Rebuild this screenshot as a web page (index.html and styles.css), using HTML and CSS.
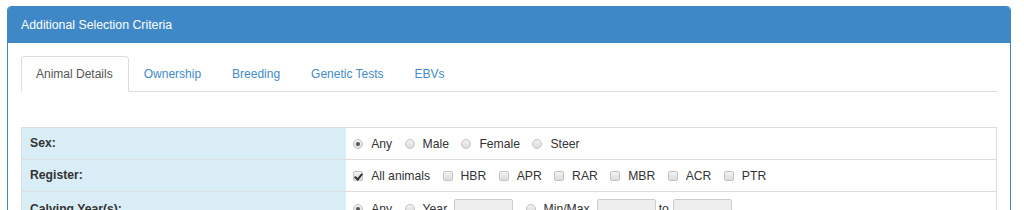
FILE: index.html
```html
<!DOCTYPE html>
<html>
<head>
<meta charset="utf-8">
<link rel="stylesheet" href="styles.css">
</head>
<body>
<div class="panel">
  <div class="panel-heading">Additional Selection Criteria</div>
  <div class="panel-body">
    <ul class="tabs">
      <li class="tab active">Animal Details</li>
      <li class="tab">Ownership</li>
      <li class="tab">Breeding</li>
      <li class="tab">Genetic Tests</li>
      <li class="tab">EBVs</li>
    </ul>
    <table class="criteria">
      <tr>
        <th>Sex:</th>
        <td>
          <span class="opt"><span class="radio on"></span>Any</span>
          <span class="opt"><span class="radio"></span>Male</span>
          <span class="opt"><span class="radio"></span>Female</span>
          <span class="opt"><span class="radio"></span>Steer</span>
        </td>
      </tr>
      <tr>
        <th>Register:</th>
        <td>
          <span class="opt"><span class="check on"></span>All animals</span>
          <span class="opt"><span class="check"></span>HBR</span>
          <span class="opt"><span class="check"></span>APR</span>
          <span class="opt"><span class="check"></span>RAR</span>
          <span class="opt"><span class="check"></span>MBR</span>
          <span class="opt"><span class="check"></span>ACR</span>
          <span class="opt"><span class="check"></span>PTR</span>
        </td>
      </tr>
      <tr class="tall">
        <th>Calving Year(s):</th>
        <td>
          <span class="opt"><span class="radio on"></span>Any</span>
          <span class="opt"><span class="radio"></span>Year<span class="box"></span></span>
          <span class="opt"><span class="radio"></span>Min/Max<span class="box"></span><span class="to">to</span><span class="box"></span></span>
        </td>
      </tr>
    </table>
  </div>
</div>
</body>
</html>
```
FILE: styles.css
```css
* { box-sizing: border-box; }
html, body { margin: 0; padding: 0; background: #fff; }
body {
  font-family: "Liberation Sans", Arial, sans-serif;
  font-size: 12.2px;
  color: #333;
  padding: 6px 13px 0 7px;
}
.panel {
  border: 1px solid #3e88c8;
  border-radius: 4px;
  height: 220px;
  overflow: hidden;
}
.panel-heading {
  background: #3e88c8;
  color: #fff;
  font-size: 12.3px;
  height: 36px;
  line-height: 16px;
  padding: 10px 13px;
}
.panel-body {
  padding: 13px 13px 0 13px;
}
.tabs {
  list-style: none;
  margin: 0;
  padding: 0;
  display: flex;
  border-bottom: 1px solid #ddd;
  font-size: 12px;
}
.tab {
  padding: 10px 15px 10px 14px;
  line-height: 14px;
  color: #428bca;
  border: 1px solid transparent;
  border-radius: 4px 4px 0 0;
  margin-bottom: -1px;
}
.tab.active {
  color: #555;
  border-color: #ddd #ddd transparent #ddd;
  background: #fff;
}
.criteria {
  margin-top: 35px;
  width: 100%;
  border-collapse: collapse;
  border: 1px solid #ddd;
}
.criteria th, .criteria td {
  border-top: 1px solid #ddd;
  padding: 6px 6px;
  line-height: 18px;
  height: 31px;
  text-align: left;
  vertical-align: middle;
  white-space: nowrap;
}
.criteria tr.tall th, .criteria tr.tall td {
  padding-top: 7px;
  padding-bottom: 7px;
}
.criteria th {
  background: #d9edf7;
  width: 33.3%;
  font-weight: bold;
  padding-left: 8px;
}
.opt {
  display: inline-flex;
  align-items: center;
  margin-right: 8px;
  vertical-align: middle;
}
.radio, .check {
  display: inline-block;
  width: 10px;
  height: 10px;
  margin-right: 8px;
  margin-left: 1px;
  border: 1px solid #c4c4c4;
  background: linear-gradient(#f2f2f2, #dcdcdc);
  position: relative;
}
.radio { border-radius: 50%; }
.check { border-radius: 2px; }
.radio.on::after {
  content: "";
  position: absolute;
  left: 2px; top: 2px;
  width: 4px; height: 4px;
  border-radius: 50%;
  background: #555;
}
.check.on::after {
  content: "";
  position: absolute;
  left: 2px; top: 0px;
  width: 3px; height: 6px;
  border: solid #333;
  border-width: 0 2px 2px 0;
  transform: rotate(40deg);
}
.box {
  display: inline-block;
  width: 59px;
  height: 21px;
  margin-left: 7px;
  background: #eee;
  border: 1px solid #ccc;
  border-radius: 2px;
}
.to { margin: 0 4px 0 3px; }
.to + .box { margin-left: 0; }
```
